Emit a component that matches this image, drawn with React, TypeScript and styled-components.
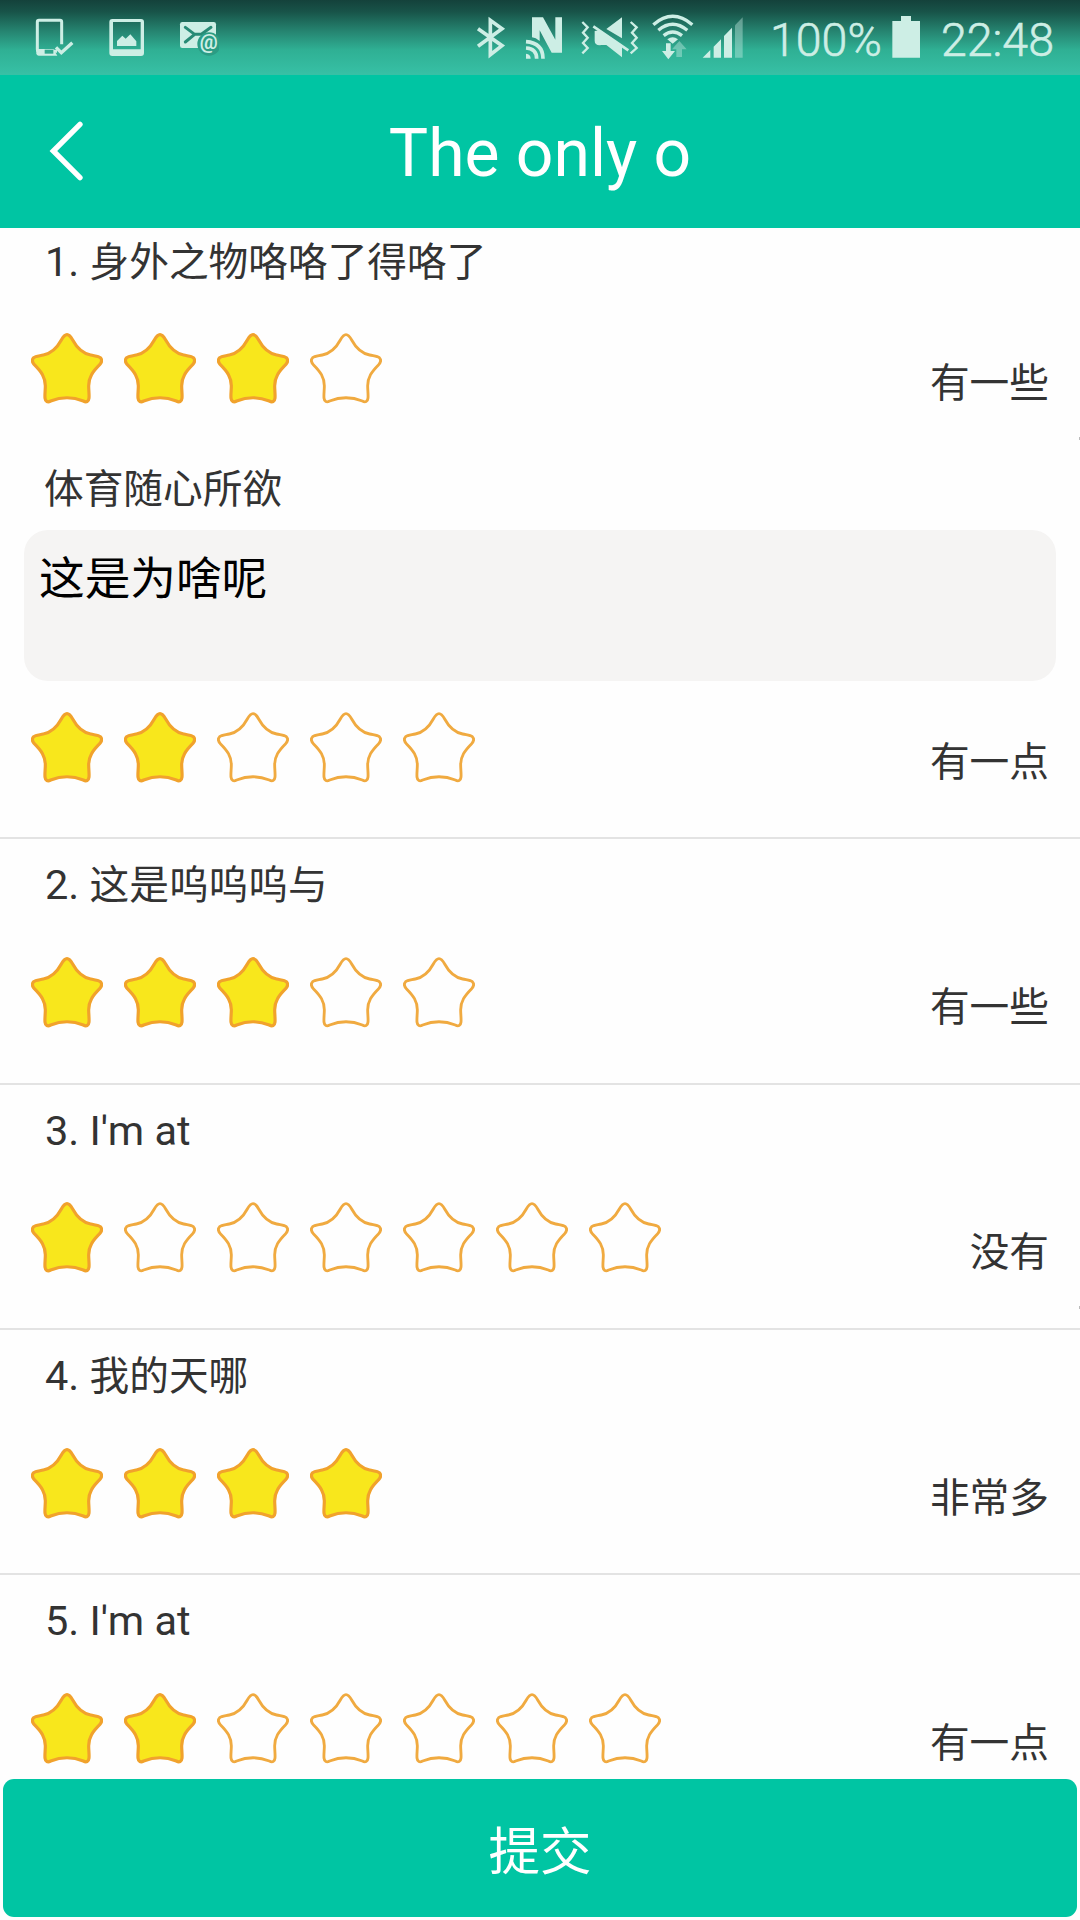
import React from "react";
import styled, { createGlobalStyle } from "styled-components";

const GlobalStyle = createGlobalStyle`
  * { box-sizing: border-box; }
  body {
    margin: 0;
    background: #fefefe;
    font-family: Roboto, "Noto Sans CJK SC", sans-serif;
    color: #333;
  }
`;

const Screen = styled.div`
  width: 1080px;
  height: 1920px;
  display: flex;
  flex-direction: column;
  overflow: hidden;
`;

const StatusBar = styled.div`
  height: 75px;
  flex: none;
  display: flex;
  align-items: flex-start;
  padding-left: 35px;
  background: linear-gradient(#14423b 0, #185449 12px, #268672 32px, #2fb094 50px, #37c0a5 74px);
  color: #cdeee5;
`;

const Glyph = styled.svg<{ $gap?: number; $top: number }>`
  display: block;
  flex: none;
  margin-left: ${(p) => p.$gap ?? 0}px;
  margin-top: ${(p) => p.$top}px;
`;

const StatusText = styled.span<{ $gap: number; $width: number }>`
  flex: none;
  width: ${(p) => p.$width}px;
  margin-left: ${(p) => p.$gap}px;
  margin-top: 13px;
  font-size: 46.5px;
  line-height: 54px;
  font-weight: 300;
  -webkit-text-stroke: 0.6px currentColor;
  white-space: nowrap;
`;

const Header = styled.header`
  height: 153px;
  flex: none;
  display: grid;
  grid-template-columns: 140px 1fr 140px;
  align-items: center;
  background: #00c5a3;
  color: #fff;
`;

const BackButton = styled.button`
  height: 100%;
  padding: 0 0 2px 48px;
  border: 0;
  background: none;
  display: flex;
  align-items: center;
`;

const Title = styled.h1`
  margin: 4px 0 0;
  font-size: 66px;
  line-height: 76px;
  font-weight: 400;
  text-align: center;
`;

const List = styled.main`
  flex: 1;
  min-height: 0;
  overflow: hidden;
`;

const Item = styled.section`
  border-bottom: 2px solid #e3e3e3;
  padding-bottom: 53.8px;
`;

const Question = styled.h2<{ $first?: boolean }>`
  margin: 0;
  height: ${(p) => (p.$first ? 105.3 : 117.5)}px;
  padding: ${(p) => (p.$first ? 8 : 20)}px 0 0 45px;
  font-size: 41.5px;
  line-height: 52px;
  font-weight: 400;
`;

const Hanzi = styled.span`
  font-size: 39.7px;
`;

const SubQuestion = styled.h3`
  margin: 0;
  height: 124.7px;
  padding: 59px 0 0 44px;
  font-size: 39.7px;
  line-height: 52px;
  font-weight: 400;
`;

const Answer = styled.div`
  height: 151px;
  margin: 0 24px 30.7px;
  padding: 20px 15px;
  border-radius: 24px;
  background: #f5f4f3;
  color: #000;
  font-size: 45.7px;
  line-height: 60px;
`;

const RatingRow = styled.div`
  position: relative;
  height: 72px;
  padding: 0 31px;
  display: flex;
  justify-content: space-between;
`;

const Stars = styled.div`
  display: flex;
  gap: 21px;
`;

const Level = styled.span`
  margin-top: 25px;
  font-size: 39.7px;
  line-height: 52px;
`;

const EdgeMark = styled.i`
  position: absolute;
  right: 0;
  top: 104px;
  width: 1px;
  height: 3px;
  background: #bbb;
`;

const Footer = styled.footer`
  flex: none;
  padding: 0 3px 3px;
`;

const Submit = styled.button`
  display: block;
  width: 100%;
  height: 138px;
  padding: 9px 0 0;
  border: 0;
  border-radius: 11px;
  background: #00c5a3;
  color: #fff;
  font: 400 51.5px/60px Roboto, "Noto Sans CJK SC", sans-serif;
`;

const STAR =
  "M141 42C149 42 153 49 158 58C172 84 187 98 212 103C225 106 236 107 241 111C248 118 245 125 239 132C218 153 206 170 206 195C206 210 208 222 207 232C206 243 199 246 190 241C155 227 127 227 92 241C83 246 76 243 75 232C74 222 76 210 76 195C76 170 64 153 43 132C37 125 34 118 41 111C46 107 57 106 70 103C95 98 110 84 124 58C129 49 133 42 141 42Z";

const Star = ({ on }: { on: boolean }) => (
  <svg width="72" height="72" viewBox="33 37 216 216">
    <path d={STAR} fill={on ? "#f8e71c" : "none"} stroke={on ? "#f1a22c" : "#f0aa40"} strokeWidth={on ? 9.5 : 8.5} />
  </svg>
);

interface RatingProps {
  score: number;
  total: number;
  level: string;
  mark?: boolean;
}

const Rating = ({ score, total, level, mark }: RatingProps) => (
  <RatingRow>
    <Stars>
      {Array.from({ length: total }, (_, i) => (
        <Star key={i} on={i < score} />
      ))}
    </Stars>
    <Level>{level}</Level>
    {mark && <EdgeMark />}
  </RatingRow>
);

const StatusIcons = () => (
  <>
    <Glyph $top={18} width="39" height="39" viewBox="105 54 117 117" fill="none" stroke="currentColor">
      <path d="M171 154H116Q112 154 112 148V66Q112 61 117 61H180Q185 61 185 66V133" strokeWidth="9" />
      <path d="M109 147H160L172 167H116Q109 167 109 160Z" fill="currentColor" stroke="none" />
      <path d="M134 155H160" stroke="#2fa78d" strokeWidth="12" />
      <path d="M168 142L184 158L217 128" strokeWidth="10" />
    </Glyph>
    <Glyph $top={18} $gap={35} width="36" height="39" viewBox="327 54 108 117" fill="currentColor">
      <path fillRule="evenodd" d="M337 57H423Q432 57 432 66V159Q432 168 423 168H337Q328 168 328 159V66Q328 57 337 57ZM339 66V148H422V66Z" />
      <path d="M351 138V123L367 107L377 116L391 103L409 124V138Z" />
    </Glyph>
    <Glyph $top={20} $gap={34} width="40" height="36" viewBox="537 60 120 108">
      <rect x="540" y="66" width="108" height="78" rx="7" fill="currentColor" />
      <path d="M556 82L584 103H604L633 82M584 103L556 126" fill="none" stroke="#278a76" strokeWidth="9" strokeLinecap="round" />
      <circle cx="627" cy="132" r="35" fill="#2b9c84" />
      <text x="626" y="147" fontSize="60" fontWeight="700" textAnchor="middle" fill="currentColor" fontFamily="Roboto, sans-serif">@</text>
    </Glyph>
    <Glyph $top={15} $gap={256} width="32" height="45" viewBox="105 45 96 135" fill="none" stroke="currentColor" strokeWidth="11">
      <path d="M114 86L186 137L151 164V61L186 86L114 139" />
    </Glyph>
    <Glyph $top={15} $gap={16} width="41" height="45" viewBox="249 45 123 135">
      <path d="M276 52H309L346 119V52H366V158H335L299 91V123Q287 113 276 112Z" fill="currentColor" />
      <path d="M258 161Q272 163 272 176H258Z" fill="currentColor" />
      <path d="M258 144Q290 146 290 176M258 125Q309 129 309 176" fill="none" stroke="currentColor" strokeWidth="11" />
    </Glyph>
    <Glyph $top={15} $gap={16} width="60" height="45" viewBox="420 45 180 135">
      <path d="M546 52V115L499 87ZM464 93L481 91L546 136V172L499 135H485Q464 138 464 122Z" fill="currentColor" />
      <path d="M460 79L565 151" stroke="currentColor" strokeWidth="8" />
      <path d="M427 66L443 82L429 98L443 113L429 129L443 144L427 160M572 66L590 82L576 98L590 113L576 129L590 144L572 160" fill="none" stroke="currentColor" strokeWidth="7" />
    </Glyph>
    <Glyph $top={13} $gap={11} width="44" height="48" viewBox="633 39 132 144">
      <path d="M640 74Q698 24 757 74M655 91Q698 55 742 91M671 107Q698 85 726 107" fill="none" stroke="currentColor" strokeWidth="10" />
      <path d="M682 118Q698 106 714 118L698 131Z" fill="currentColor" />
      <path d="M678 130H692V153H705L685 178L666 153H678Z" fill="currentColor" />
      <path d="M709 171V148H696L718 123L740 148H726V171Z" fill="currentColor" opacity=".4" />
    </Glyph>
    <Glyph $top={15} $gap={7} width="42" height="45" viewBox="786 45 126 135" fill="currentColor">
      <path d="M788 173L811 150V173ZM821 173V140L843 118V173ZM852 173V108L876 83V173Z" />
      <path d="M885 173V76L908 52V173Z" opacity=".4" />
    </Glyph>
  </>
);

export default function App() {
  return (
    <Screen>
      <GlobalStyle />
      <StatusBar>
        <StatusIcons />
        <StatusText $gap={26} $width={112}>100%</StatusText>
        <Glyph $top={15} $gap={9} width="30" height="44" viewBox="453 45 90 132" fill="currentColor">
          <path d="M457 63H483V48H513V63H540V173H457Z" />
        </Glyph>
        <StatusText $gap={20} $width={118}>22:48</StatusText>
      </StatusBar>
      <Header>
        <BackButton aria-label="Back">
          <svg width="38" height="62" viewBox="144 361 114 186" fill="none" stroke="#fff" strokeWidth="16" strokeLinecap="round">
            <path d="M240 374L160 454L240 534" />
          </svg>
        </BackButton>
        <Title>The only o</Title>
      </Header>
      <List>
        <Item>
          <Question $first>1. <Hanzi>身外之物咯咯了得咯了</Hanzi></Question>
          <Rating score={3} total={4} level="有一些" mark />
          <SubQuestion>体育随心所欲</SubQuestion>
          <Answer>这是为啥呢</Answer>
          <Rating score={2} total={5} level="有一点" />
        </Item>
        <Item>
          <Question>2. <Hanzi>这是呜呜呜与</Hanzi></Question>
          <Rating score={3} total={5} level="有一些" />
        </Item>
        <Item>
          <Question>3. I'm at</Question>
          <Rating score={1} total={7} level="没有" mark />
        </Item>
        <Item>
          <Question>4. <Hanzi>我的天哪</Hanzi></Question>
          <Rating score={4} total={4} level="非常多" />
        </Item>
        <Item>
          <Question>5. I'm at</Question>
          <Rating score={2} total={7} level="有一点" />
        </Item>
      </List>
      <Footer>
        <Submit>提交</Submit>
      </Footer>
    </Screen>
  );
}
